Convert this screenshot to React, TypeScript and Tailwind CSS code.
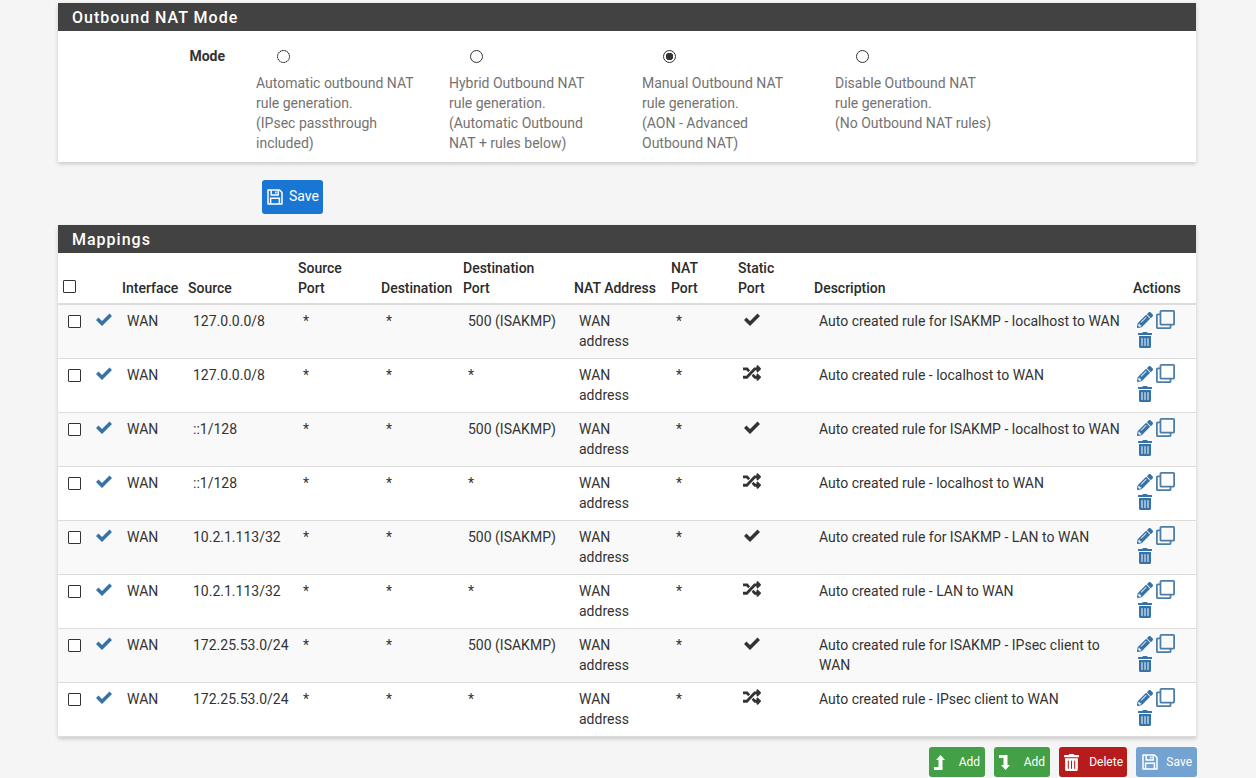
import { FaRandom, FaPencilAlt, FaRegClone, FaTrashAlt } from "react-icons/fa";

const rows = [
  { src: "127.0.0.0/8", port: "500 (ISAKMP)", isakmp: true, desc: "Auto created rule for ISAKMP - localhost to WAN" },
  { src: "127.0.0.0/8", port: "*", isakmp: false, desc: "Auto created rule - localhost to WAN" },
  { src: "::1/128", port: "500 (ISAKMP)", isakmp: true, desc: "Auto created rule for ISAKMP - localhost to WAN" },
  { src: "::1/128", port: "*", isakmp: false, desc: "Auto created rule - localhost to WAN" },
  { src: "10.2.1.113/32", port: "500 (ISAKMP)", isakmp: true, desc: "Auto created rule for ISAKMP - LAN to WAN" },
  { src: "10.2.1.113/32", port: "*", isakmp: false, desc: "Auto created rule - LAN to WAN" },
  { src: "172.25.53.0/24", port: "500 (ISAKMP)", isakmp: true, desc: "Auto created rule for ISAKMP - IPsec client to WAN" },
  { src: "172.25.53.0/24", port: "*", isakmp: false, desc: "Auto created rule - IPsec client to WAN" },
];

const modes = [
  { a: "Automatic outbound NAT rule generation.", b: "(IPsec passthrough included)", on: false, focus: true },
  { a: "Hybrid Outbound NAT rule generation.", b: "(Automatic Outbound NAT + rules below)", on: false, focus: false },
  { a: "Manual Outbound NAT rule generation.", b: "(AON - Advanced Outbound NAT)", on: true, focus: false },
  { a: "Disable Outbound NAT rule generation.", b: "(No Outbound NAT rules)", on: false, focus: false },
];

const widths = [28, 31, 66, 110, 83, 82, 111, 97, 67, 76, 319, 68];
const heads: string[][] = [[], [], ["Interface"], ["Source"], ["Source", "Port"], ["Destination"], ["Destination", "Port"], ["NAT Address"], ["NAT", "Port"], ["Static", "Port"], ["Description"], ["Actions"]];

const th = "pl-[5px] pr-0 pt-[5px] pb-[5px] text-left align-bottom font-medium text-[14px] leading-5 text-[#2b2b2b] border-b-2 border-[#dcdcdc]";
const td = "pl-[10px] pr-[5px] pt-[6px] pb-[7px] align-top text-[14px] leading-5 text-[#333]";
const box = "block appearance-none w-[13px] h-[13px] border border-[#333] bg-white rounded-[1px] m-0";

function SaveIcon() {
  return (
    <svg viewBox="0 0 16 16" className="h-[16px] w-[16px]" fill="none" stroke="currentColor" strokeWidth="1.5">
      <path d="M1 1h11.5L15 3.5V15H1z" strokeLinejoin="round" />
      <path d="M4.2 1v5h7V1M8.8 2.4v2.2" />
      <path d="M3.6 15V9.2h8.8V15" />
    </svg>
  );
}

function Check({ className }: { className: string }) {
  return (
    <svg viewBox="0 0 16 13" className={className} fill="currentColor">
      <path d="M0 7l2.5-2.5L6 8l7.5-7.5L16 3 6 13z" />
    </svg>
  );
}

function LevelUp() {
  return (
    <svg viewBox="0 0 11 15" className="h-[15px] w-[11px]" fill="currentColor">
      <path d="M6.5 0L11 5H8.5V15H0V12H4.5V5H2z" />
    </svg>
  );
}

function LevelDown() {
  return (
    <svg viewBox="0 0 11 15" className="h-[15px] w-[11px]" fill="currentColor">
      <path d="M0 0H8.5V10H11L6.5 15L2 10H4.5V3H0z" />
    </svg>
  );
}

function Panel({ title, children }: { title: string; children: React.ReactNode }) {
  return (
    <section className="bg-white shadow-[0_2px_4px_rgba(0,0,0,0.18)]">
      <h2 className="h-[28px] bg-[#424242] pl-[14px] text-[16px] leading-[29px] font-medium tracking-[1px] text-white">{title}</h2>
      {children}
    </section>
  );
}

function ActionButton({ icon, label, className }: { icon: React.ReactNode; label: string; className: string }) {
  return (
    <button className={`flex h-[30px] items-center justify-between rounded-[3px] text-[12px] text-white ${className}`}>
      {icon}
      <span>{label}</span>
    </button>
  );
}

export default function App() {
  return (
    <div className="h-[778px] overflow-hidden bg-[#f5f5f5] pl-[58px] pr-[60px] pt-[3px] font-['Roboto',sans-serif]">
      <Panel title="Outbound NAT Mode">
        <div className="flex h-[131px] pt-[15px]">
          <div className="w-[168px] pr-px text-right text-[14px] leading-5 font-bold text-[#333]">Mode</div>
          <div className="ml-[30px] flex">
            {modes.map((m) => (
              <div key={m.a} className="w-[193px]">
                <div className="flex h-[20px] items-center pl-[21px]">
                  <input
                    type="radio"
                    name="mode"
                    defaultChecked={m.on}
                    className={`block appearance-none m-0 h-[13px] w-[13px] rounded-full bg-white ${m.focus ? "border border-[#999] outline-1 -outline-offset-1 outline-dotted outline-black" : "border border-[#333]"} ${m.on ? "bg-[radial-gradient(circle,#333_0,#333_3.5px,#fff_4px)]" : ""}`}
                  />
                </div>
                <p className="mt-[7px] w-[160px] text-[14px] leading-5 text-[#737373]">
                  {m.a}
                  <br />
                  {m.b}
                </p>
              </div>
            ))}
          </div>
        </div>
      </Panel>

      <div className="ml-[204px] mt-[18px] mb-[11px]">
        <button className="flex h-[34px] w-[61px] items-center gap-[6px] rounded-[3px] bg-[#1976d2] pl-[5px] text-[14px] text-white">
          <SaveIcon />
          <span className="pb-px">Save</span>
        </button>
      </div>

      <Panel title="Mappings">
        <table className="w-full table-fixed border-collapse">
          <colgroup>
            {widths.map((w, i) => (
              <col key={i} style={{ width: w }} />
            ))}
          </colgroup>
          <thead>
            <tr>
              {heads.map((h, i) => (
                <th key={i} className={th}>
                  {i === 0 ? (
                    <input type="checkbox" className={`${box} mb-[5px]`} />
                  ) : (
                    h.map((l) => <div key={l}>{l}</div>)
                  )}
                </th>
              ))}
            </tr>
          </thead>
          <tbody>
            {rows.map((r, i) => (
              <tr key={i} className={`border-b border-[#dcdcdc] ${i % 2 === 0 ? "bg-[#f9f9f9]" : "bg-white"}`}>
                <td className={td}>
                  <input type="checkbox" className={`${box} mt-[4px]`} />
                </td>
                <td className="pl-[10px] pt-[8px] align-top">
                  <Check className="h-[13px] w-[16px] text-[#3572a8]" />
                </td>
                <td className={td}>WAN</td>
                <td className={td}>{r.src}</td>
                <td className={td}>*</td>
                <td className={td}>*</td>
                <td className={td}>{r.port}</td>
                <td className={td}>WAN address</td>
                <td className={td}>*</td>
                <td className={`${td} text-[#2b2b2b]`}>
                  {r.isakmp ? (
                    <Check className="ml-px mt-[2px] h-[13px] w-[16px]" />
                  ) : (
                    <FaRandom className="-mt-px h-[18px] w-[18px]" />
                  )}
                </td>
                <td className={td}>{r.desc}</td>
                <td className="pl-[9px] pt-[5px] align-top">
                  <div className="flex w-[40px] flex-wrap items-start">
                    <FaPencilAlt className="mt-[2px] h-[16px] w-[16px] text-[#3572a8]" />
                    <FaRegClone className="ml-[3px] h-[19px] w-[19px] text-[#4d7ea8]" />
                    <FaTrashAlt className="ml-px mt-[3px] h-[16px] w-[14px] text-[#3572a8]" />
                  </div>
                </td>
              </tr>
            ))}
          </tbody>
        </table>
      </Panel>

      <div className="mt-[10px] flex justify-end gap-[9px]">
        <ActionButton className="w-[56px] bg-[#43a047] pl-[5px] pr-[5px]" icon={<LevelUp />} label="Add" />
        <ActionButton className="w-[56px] bg-[#43a047] pl-[5px] pr-[5px]" icon={<LevelDown />} label="Add" />
        <ActionButton className="w-[68px] bg-[#b71c1c] pl-[5px] pr-[4px]" icon={<FaTrashAlt className="h-[17px] w-[15px]" />} label="Delete" />
        <ActionButton className="-mr-px w-[61px] bg-[#75a3d1] pl-[6px] pr-[5px]" icon={<SaveIcon />} label="Save" />
      </div>
    </div>
  );
}
